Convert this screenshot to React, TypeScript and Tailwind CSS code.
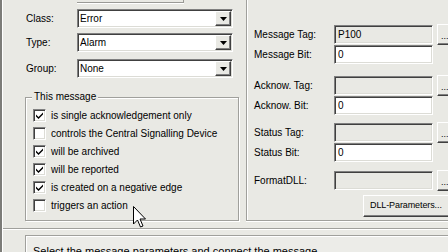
import { ReactNode } from "react";

const sunken =
  "border border-t-[#808080] border-l-[#808080] border-b-white border-r-white shadow-[inset_1px_1px_0_#404040,inset_-1px_-1px_0_#dcdcd6]";
const raised =
  "border border-t-white border-l-white border-b-[#404040] border-r-[#404040] shadow-[inset_-1px_-1px_0_#808080]";
const etched =
  "border border-[#a0a09c] shadow-[inset_1px_1px_0_white,1px_1px_0_white]";

function Combo({ value }: { value: string }) {
  return (
    <div className={`w-[156px] h-[19px] bg-white flex items-center ${sunken}`}>
      <span className="flex-1 pl-[2px] leading-none">{value}</span>
      <div
        className={`w-[16px] h-[15px] mr-[1px] flex items-center justify-center bg-[#e9e9e4] ${raised}`}
      >
        <svg width="7" height="4" viewBox="0 0 7 4">
          <path d="M0 0h7L3.5 4z" fill="black" />
        </svg>
      </div>
    </div>
  );
}

function ComboRow({ label, value, className }: { label: string; value: string; className: string }) {
  return (
    <div className={`flex items-center pl-[23px] ${className}`}>
      <span className="w-[51px]">{label}</span>
      <Combo value={value} />
    </div>
  );
}

function Check({ checked, children }: { checked?: boolean; children: ReactNode }) {
  return (
    <div className="h-[18px] flex items-center gap-[5px] pl-[7px]">
      <div className={`w-[13px] h-[13px] shrink-0 bg-white flex items-center justify-center ${sunken}`}>
        {checked && (
          <svg width="7" height="7" viewBox="0 0 7 7">
            <path d="M0 2.5L2.5 5L7 0.5V2.5L2.5 7L0 4.5Z" fill="black" />
          </svg>
        )}
      </div>
      <span>{children}</span>
    </div>
  );
}

function Field({ value, disabled }: { value?: string; disabled?: boolean }) {
  return (
    <div
      className={`w-[99px] h-[19px] shrink-0 flex items-center pl-[3px] ${sunken} ${
        disabled ? "bg-[#e9e9e4]" : "bg-white"
      }`}
    >
      {value}
    </div>
  );
}

function TagRow({ label, value, className = "" }: { label: string; value?: string; className?: string }) {
  return (
    <div className={`flex items-center h-[21px] shrink-0 ${className}`}>
      <span className="w-[80px] shrink-0">{label}</span>
      <Field value={value} disabled />
      <div
        className={`w-[22px] h-[21px] ml-[4px] shrink-0 flex items-end pl-[3px] pb-[3px] leading-none text-[9px] bg-[#e9e9e4] ${raised}`}
      >
        ...
      </div>
    </div>
  );
}

function BitRow({ label }: { label: string }) {
  return (
    <div className="flex items-center h-[19px] shrink-0">
      <span className="w-[80px] shrink-0">{label}</span>
      <Field value="0" />
    </div>
  );
}

export default function App() {
  return (
    <div className="w-[448px] h-[252px] overflow-hidden relative flex bg-[#e9e9e4] text-black text-[10px] font-['Liberation_Sans',Arial,sans-serif]">
      <div className="w-[3px] shrink-0 bg-[#7c7c78] border-r border-white" />
      <div className="flex-1 flex flex-col">
        <div className="flex h-[222px] shrink-0">
          {/* left panel */}
          <div className="w-[243px] shrink-0 flex flex-col">
            <div className="ml-[74px] w-[107px] h-[3px] border-b border-r border-[#9a9a96] shadow-[0_1px_0_white]" />
            <ComboRow label="Class:" value="Error" className="mt-[6px]" />
            <ComboRow label="Type:" value="Alarm" className="mt-[5px]" />
            <ComboRow label="Group:" value="None" className="mt-[7px]" />
            <div className={`relative ml-[22px] mt-[19px] w-[214px] h-[124px] pt-[8px] ${etched}`}>
              <span className="absolute -top-[7px] left-[6px] px-[2px] bg-[#e9e9e4] leading-[12px]">
                This message
              </span>
              <Check checked>is single acknowledgement only</Check>
              <Check>controls the Central Signalling Device</Check>
              <Check checked>will be archived</Check>
              <Check checked>will be reported</Check>
              <Check checked>is created on a negative edge</Check>
              <Check>triggers an action</Check>
            </div>
          </div>
          {/* right panel */}
          <div className="w-[210px] shrink-0 h-[221px] flex flex-col pt-[24px] pl-[7px] border-l border-b border-[#a0a09c] shadow-[inset_1px_0_0_white,0_1px_0_white]">
            <TagRow label="Message Tag:" value="P100" />
            <BitRow label="Message Bit:" />
            <TagRow label="Acknow. Tag:" className="mt-[11px]" />
            <BitRow label="Acknow. Bit:" />
            <TagRow label="Status Tag:" className="mt-[7px]" />
            <BitRow label="Status Bit:" />
            <TagRow label="FormatDLL:" className="mt-[8px]" />
            <div
              className={`ml-[109px] mt-[4px] w-[100px] h-[22px] shrink-0 flex items-center pl-[6px] text-[9px] tracking-[-0.1px] ${raised}`}
            >
              DLL-Parameters...
            </div>
          </div>
        </div>
        <div className="mt-[6px] h-[2px] border-t border-[#a0a09c] border-b border-b-white" />
        <div className="ml-[22px] mt-[5px] flex-1 border-t border-l border-[#a0a09c] shadow-[inset_1px_1px_0_white] bg-[#ececE8] pl-[7px] pt-[9px] text-[11px] leading-[13px]">
          Select the message parameters and connect the message.
        </div>
      </div>
      {/* mouse cursor */}
      <svg
        className="absolute left-[133px] top-[206px]"
        width="13"
        height="22"
        viewBox="0 0 13 22"
      >
        <path
          d="M0.5 0.5V18L4.5 14L7.5 21L10 20L7 13H12.5Z"
          fill="white"
          stroke="black"
          strokeWidth="1"
          strokeLinejoin="miter"
        />
      </svg>
    </div>
  );
}
